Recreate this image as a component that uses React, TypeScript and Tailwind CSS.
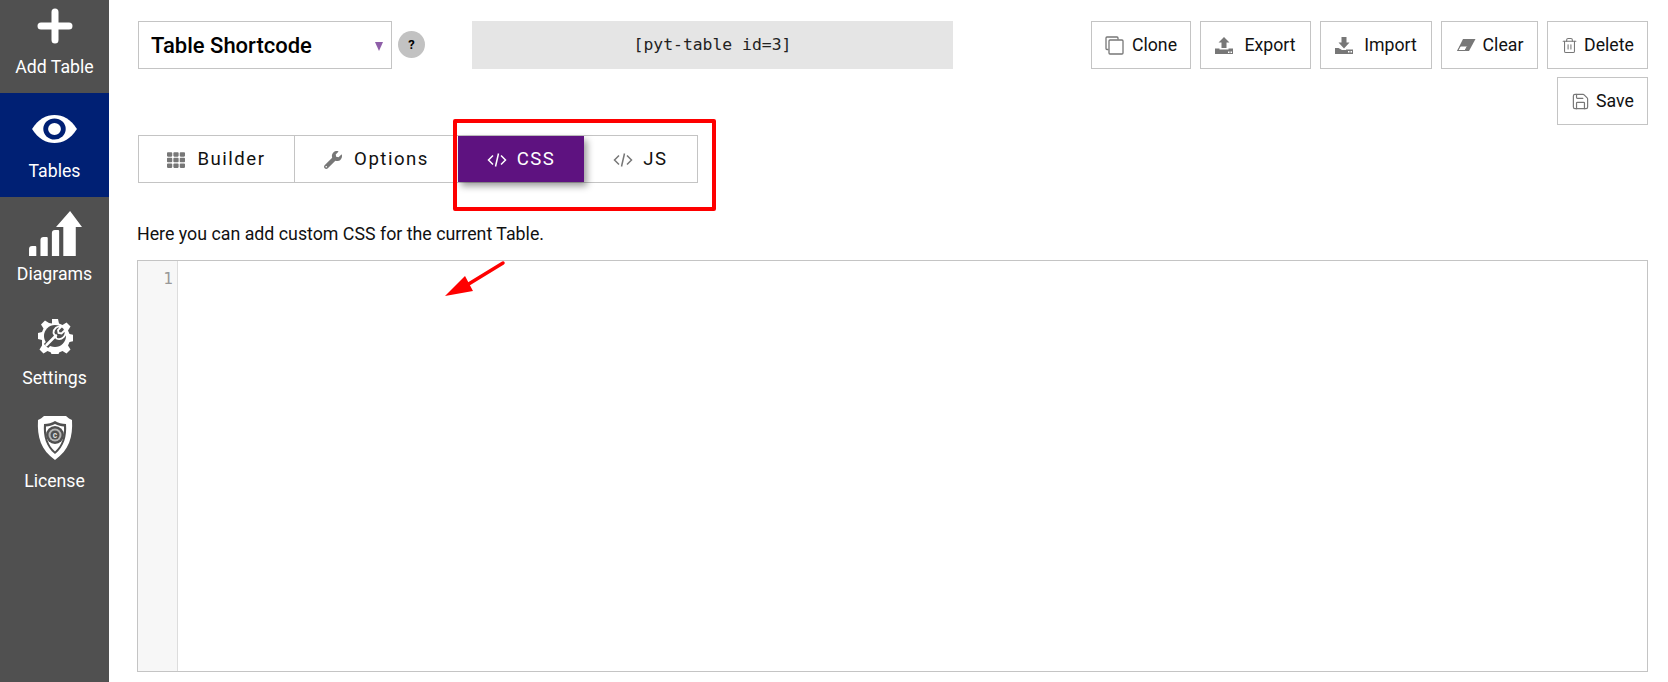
import { Save, Trash2 } from "lucide-react";
import { FaTh, FaWrench } from "react-icons/fa";
import type { ReactNode } from "react";

function PlusIcon() {
  return (
    <svg width="36" height="36" viewBox="0 0 36 36">
      <path d="M18 4v28M4 18h28" stroke="#fff" strokeWidth="7" strokeLinecap="round" />
    </svg>
  );
}

function EyeIcon() {
  return (
    <svg width="47" height="30" viewBox="0 0 44 30" preserveAspectRatio="none">
      <path d="M1 15C7 5 14 1 22 1s15 4 21 14c-6 10-13 14-21 14S7 25 1 15z" fill="#fff" />
      <circle cx="22" cy="15" r="10.5" fill="#002074" />
      <circle cx="22" cy="15" r="6" fill="#fff" />
    </svg>
  );
}

function DiagramIcon() {
  return (
    <svg width="54" height="46" viewBox="0 0 52 46" preserveAspectRatio="none">
      <path d="M1 46V39q0-3 3-3h3q1 0 1 1v9zM12 46V30q0-3 3-3h3q1 0 1 1v18zM23 46V23q0-3 3-3h3q1 0 1 1v25z" fill="#fff" />
      <path d="M34 46V17h-7L40.500 1 52 17h-6v29z" fill="#fff" />
    </svg>
  );
}

function GearIcon() {
  return (
    <svg width="36" height="36" viewBox="0 0 36 36" fill="none">
      <path
        d="M15 1h6l1 4.500 3.500 1.500 4-2.500 4 4-2.500 4 1.500 3.500 4.500 1v6l-4.500 1-1.500 3.500 2.500 4-4 4-4-2.500-3.500 1.500-1 4.500h-6l-1-4.500-3.500-1.500-4 2.500-4-4 2.500-4L5 22l-4-1v-6l4-1 1.500-3.500-2.500-4 4-4 4 2.500L15 5.500z"
        fill="#fff"
      />
      <circle cx="18" cy="18" r="11" fill="#505050" />
      <path d="M9 28l9-9" stroke="#505050" strokeWidth="6" />
      <path d="M9.500 27l9.500-9.500" stroke="#fff" strokeWidth="2.500" strokeLinecap="round" />
      <path d="M16.500 15a6.500 6.500 0 0 1 8-6.500l-3.500 3.500.5 3 3 .5 3.500-3.500a6.500 6.500 0 0 1-8.500 8.500z" fill="none" stroke="#fff" strokeWidth="1.800" />
    </svg>
  );
}

function ShieldIcon() {
  return (
    <svg width="36" height="46" viewBox="0 0 36 46" fill="none">
      <path d="M7 1h22c2 2 4 3 6 4 1 17-3 30-17 40C4 35 0 22 1 5c2-1 4-2 6-4z" fill="#fff" />
      <path d="M18 6c3 2 7 3 11 3 1 12-2 23-11 30C9 32 6 21 7 9c4 0 8-1 11-3z" fill="#505050" />
      <path d="M18 9c3 1.500 6 2.500 9 2.500 .5 10-2 19-9 25-7-6-9.500-15-9-25 3 0 6-1 9-2.500z" fill="#fff" />
      <circle cx="18" cy="20" r="9" fill="#505050" />
      <circle cx="18" cy="20" r="6.500" fill="#b5b5b5" />
      <circle cx="18" cy="20" r="4.500" fill="#505050" />
      <text x="18" y="23" textAnchor="middle" fontSize="8.500" fontWeight="700" fill="#ddd" fontFamily="Roboto, sans-serif">
        c
      </text>
    </svg>
  );
}

function CloneIcon() {
  return (
    <svg width="19" height="19" viewBox="0 0 19 19" fill="none" stroke="#777" strokeWidth="1.300">
      <path d="M3.500 13.500H2a1 1 0 0 1-1-1V2a1 1 0 0 1 1-1h10a1 1 0 0 1 1 1v1.500" />
      <rect x="4" y="4" width="14" height="14" rx="1" />
    </svg>
  );
}

function ExportIcon() {
  return (
    <svg width="18" height="17" viewBox="0 0 18 17" fill="#777">
      <path d="M9 0l5.500 5.500H11.500V11h-5V5.500H3.500zM0 11.500h4.500v1h9v-1H18V17H0z" />
      <path d="M13 14.500h1.500V16H13zM15.500 14.500H17V16h-1.500z" fill="#fff" />
    </svg>
  );
}

function ImportIcon() {
  return (
    <svg width="18" height="17" viewBox="0 0 18 17" fill="#777">
      <path d="M6.500 0h5v5.500h3L9 11.500l-5.500-6h3zM0 11h3.500L7 13h4v-.5H18V17H0z" />
      <path d="M13 14H14.500V15.500H13zM15.500 14H17V15.500H15.500z" fill="#fff" />
    </svg>
  );
}

function EraserIcon() {
  return (
    <svg width="20" height="14" viewBox="0 0 20 14">
      <path d="M7 1H19.500L13 13H1z" fill="#777" />
      <path d="M4.500 8H11.500L9 12.500H1.800z" fill="#fff" stroke="#777" strokeWidth="1" />
    </svg>
  );
}

function CodeIcon({ color }: { color: string }) {
  return (
    <svg width="20" height="16" viewBox="0 0 20 16" fill="none" stroke={color} strokeWidth="1.500">
      <path d="M6 3.500L1.500 8 6 12.500M14 3.500L18.500 8 14 12.500M11.500 1.500l-3 13" />
    </svg>
  );
}

function NavItem({ icon, label, pb, mb, active }: { icon: ReactNode; label: string; pb: string; mb: string; active?: boolean }) {
  return (
    <div
      className={`flex h-[104px] flex-col items-center justify-end text-[17.7px] leading-5 text-white ${pb} ${
        active ? "bg-[#002074]" : ""
      }`}
    >
      <div className={`flex h-[52px] items-end justify-center ${mb}`}>{icon}</div>
      {label}
    </div>
  );
}

function ActionButton({ icon, label, w, gap }: { icon: ReactNode; label: string; w: string; gap: string }) {
  return (
    <button className={`flex h-[48px] items-center justify-center border border-[#c4c4c4] bg-white text-[17.7px] text-[#111] ${w} ${gap}`}>
      {icon}
      {label}
    </button>
  );
}

export default function App() {
  return (
    <div className="flex h-[682px] w-[1668px] overflow-hidden bg-white font-['Roboto',sans-serif]">
      <aside className="w-[109px] shrink-0 bg-[#505050]">
        <div className="-mt-[11px]">
          <NavItem icon={<PlusIcon />} label="Add Table" pb="pb-[16px]" mb="mb-[13px]" />
          <NavItem icon={<EyeIcon />} label="Tables" pb="pb-[16px]" mb="mb-[17px]" active />
          <NavItem icon={<DiagramIcon />} label="Diagrams" pb="pb-[17px]" mb="mb-[8px]" />
          <NavItem icon={<GearIcon />} label="Settings" pb="pb-[17px]" mb="mb-[14px]" />
          <NavItem icon={<ShieldIcon />} label="License" pb="pb-[18px]" mb="mb-[10px]" />
        </div>
      </aside>

      <main className="relative min-w-0 flex-1 pl-[29px] pr-[20px] pt-[21px]">
        <div className="flex items-start">
          <div className="flex h-[48px] w-[254px] items-center justify-between border border-[#c4c4c4] pl-[12px] pr-[8px] text-[22px] font-medium text-black">
            Table Shortcode
            <span className="mt-[3px] h-0 w-0 border-x-[4.500px] border-t-[9px] border-x-transparent border-t-[#8e5ea8]" />
          </div>
          <span className="ml-[6px] mt-[10px] flex h-[27px] w-[27px] items-center justify-center rounded-full bg-[#c2c2c2] text-[13px] font-bold text-black">
            ?
          </span>
          <div className="ml-[47px] flex h-[48px] w-[481px] items-center justify-center bg-[#e5e5e5] font-['DejaVu_Sans_Mono',monospace] text-[16.400px] text-[#222]">
            [pyt-table id=3]
          </div>
          <div className="ml-auto flex flex-col items-end gap-[8px]">
            <div className="flex gap-[9px]">
              <ActionButton w="w-[100px]" gap="gap-[8px]" icon={<CloneIcon />} label="Clone" />
              <ActionButton w="w-[111px]" gap="gap-[11px]" icon={<ExportIcon />} label="Export" />
              <ActionButton w="w-[112px]" gap="gap-[11px]" icon={<ImportIcon />} label="Import" />
              <ActionButton w="w-[97px]" gap="gap-[7px]" icon={<EraserIcon />} label="Clear" />
              <ActionButton w="w-[101px]" gap="gap-[6px]" icon={<Trash2 size={17} strokeWidth={1.5} className="text-[#777]" />} label="Delete" />
            </div>
            <ActionButton w="w-[91px]" gap="gap-[6px]" icon={<Save size={19} strokeWidth={1.5} className="text-[#777]" />} label="Save" />
          </div>
        </div>

        <div className="mt-[10px] flex h-[48px] w-[560px] items-stretch border border-[#c4c4c4] text-[18.600px] tracking-[1.5px] text-[#111]">
          <div className="flex w-[156px] items-center justify-center gap-[12px] border-r border-[#c4c4c4] pt-[2px]">
            <FaTh size={18} className="text-[#777]" />
            Builder
          </div>
          <div className="flex w-[163px] items-center justify-center gap-[12px] pt-[2px]">
            <FaWrench size={18} className="text-[#777]" />
            Options
          </div>
          <div className="flex w-[126px] flex-none items-center justify-center gap-[10px] bg-[#5e1280] pt-[2px] text-white shadow-[3px_4px_7px_rgba(0,0,0,0.4)]">
            <CodeIcon color="#fff" />
            CSS
          </div>
          <div className="flex flex-1 items-center justify-center gap-[10px] pt-[2px]">
            <CodeIcon color="#777" />
            JS
          </div>
        </div>

        <p className="-ml-px mt-[41px] text-[17.800px] leading-5 text-[#111]">Here you can add custom CSS for the current Table.</p>

        <div className="-ml-px mt-[16px] flex h-[412px] border border-[#c4c4c4]">
          <div className="w-[40px] border-r border-[#ddd] bg-[#f7f7f7] pr-[4px] pt-[8px] text-right font-['DejaVu_Sans_Mono',monospace] text-[16px] leading-5 text-[#999]">
            1
          </div>
          <div className="flex-1 bg-white" />
        </div>

        {/* annotation drawn on top of the screenshot */}
        <div className="absolute left-[344px] top-[119px] h-[92px] w-[263px] rounded-[2px] border-[4px] border-[#fe0000]" />
        <svg className="absolute left-[330px] top-[255px]" width="80" height="45" viewBox="0 0 80 45">
          <path d="M64 8L28 30" stroke="#fe0000" strokeWidth="3.500" strokeLinecap="round" />
          <path d="M6 41L26 21l8 15z" fill="#fe0000" />
        </svg>
      </main>
    </div>
  );
}
